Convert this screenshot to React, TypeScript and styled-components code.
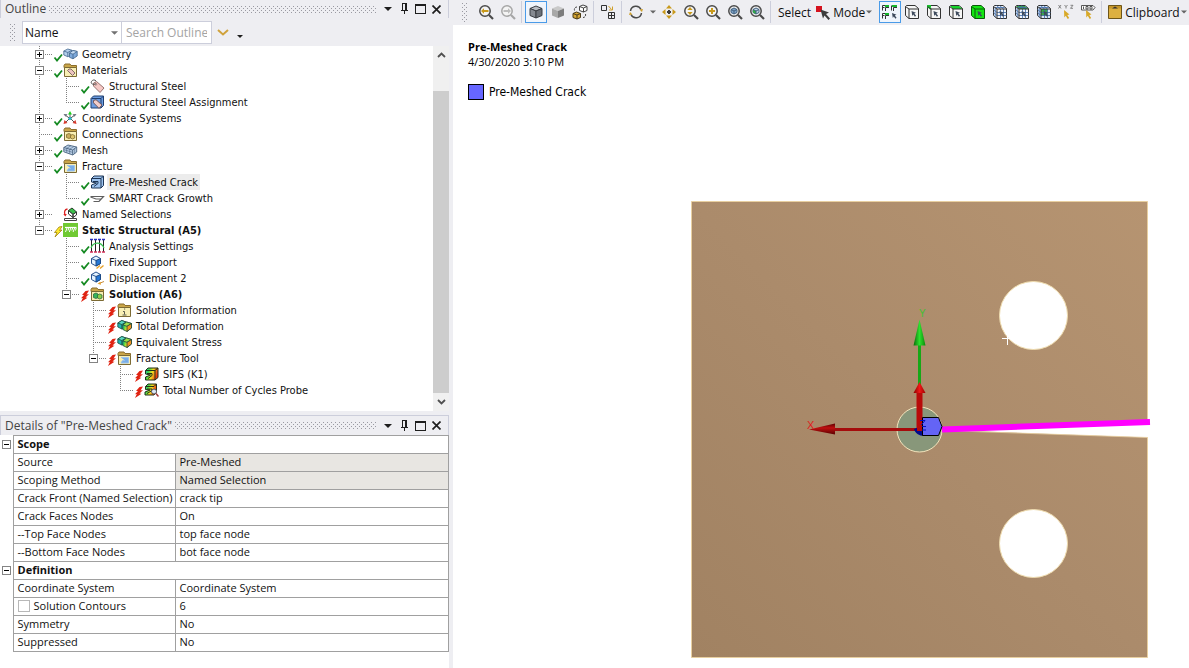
import React from "react";
import styled, { createGlobalStyle, css } from "styled-components";

const uiFont = `"Open Sans", "Noto Sans", sans-serif`;
const treeFont = `"DejaVu Sans Condensed", "DejaVu Sans", sans-serif`;
const chrome = "#eeeef2";

const Global = createGlobalStyle`
  *, *::before, *::after { box-sizing: border-box; }
  body { margin: 0; background: #fff; color: #111; font-family: ${uiFont}; font-size: 11px; }
  button, input, select { font: inherit; color: inherit; }
  ul { list-style: none; margin: 0; padding: 0; }
`;

/* ---------- page frame ---------- */

const Shell = styled.div`
  display: flex;
  min-height: 100vh;
`;

const Sidebar = styled.aside`
  display: flex;
  flex-direction: column;
  flex: 0 0 453px;
  padding-right: 4px;
  background: ${chrome};
`;

const Workspace = styled.main`
  display: flex;
  flex-direction: column;
  flex: 1;
  min-width: 0;
`;

/* ---------- panels ---------- */

const PanelHeader = styled.header<{ $tall?: boolean }>`
  display: flex;
  align-items: center;
  gap: 3px;
  height: ${(p) => (p.$tall ? 20 : 18)}px;
  padding: 0 4px;
  border: solid #cccedb;
  border-width: ${(p) => (p.$tall ? "1px 1px 0" : "0 1px")};
  background: ${chrome};
`;

const PanelTitle = styled.h2`
  margin: 0;
  font-size: 12px;
  line-height: 16px;
  font-weight: 400;
  color: #444;
  white-space: nowrap;
`;

/* staggered one-pixel dots */
const dotPattern = css`
  background-image: conic-gradient(at 1px 1px, transparent 270deg, #9a9aa2 0),
    conic-gradient(at 1px 1px, transparent 270deg, #9a9aa2 0);
  background-size: 4px 4px;
  background-position: 0 0, 2px 2px;
`;

const HeaderGrip = styled.div`
  flex: 1;
  height: 7px;
  ${dotPattern}
`;

const WindowButtons = styled.div`
  display: flex;
`;

const PlainButton = styled.button`
  display: grid;
  place-items: center;
  width: 16px;
  height: 16px;
  padding: 0;
  border: 0;
  background: transparent;
`;

const FilterBar = styled.div`
  display: flex;
  align-items: center;
  height: 28px;
  padding: 2px 0 2px 10px;
`;

const Grip = styled.div<{ $h: number }>`
  flex: none;
  width: 5px;
  height: ${(p) => p.$h}px;
  margin-right: 1px;
  ${dotPattern}
`;

const SelectWrap = styled.label`
  position: relative;
  display: block;
  width: 100px;
  margin-left: 6px;
`;

const FieldSelect = styled.select`
  display: block;
  appearance: none;
  width: 100%;
  height: 23px;
  padding: 0 18px 0 2px;
  border: 1px solid #cccedb;
  border-radius: 0;
  background: #fff;
  font-size: 12px;
`;

const SelectCaret = styled.svg`
  position: absolute;
  right: 4px;
  top: 10px;
  pointer-events: none;
`;

const SearchInput = styled.input`
  width: 90px;
  height: 23px;
  padding: 0 4px;
  border: 1px solid #cccedb;
  border-left: 0;
  background: #fff;
  font-size: 12px;
  &::placeholder { color: #a4a4a4; opacity: 1; }
`;

const TreeArea = styled.div`
  display: flex;
  background: #fff;
  margin-bottom: 4px;
`;

const TreeList = styled.ul`
  flex: 1;
  && { padding: 0 0 13px 35px; }
`;

const TreeRow = styled.div`
  display: flex;
  height: 16px;
`;

const TreeLabel = styled.span<{ $bold?: boolean; $active?: boolean }>`
  height: 16px;
  margin-left: 2px;
  padding: 0 2px;
  line-height: 18px;
  font-family: ${treeFont};
  font-weight: ${(p) => (p.$bold ? 700 : 400)};
  background: ${(p) => (p.$active ? "#ececec" : "transparent")};
  white-space: nowrap;
`;

const ScrollTrack = styled.div`
  display: flex;
  flex-direction: column;
  width: 16px;
  background: #f0f0f0;
`;

const ScrollArrow = styled.button`
  display: grid;
  place-items: center;
  height: 18px;
  padding: 0;
  border: 0;
  background: #f0f0f0;
`;

const ScrollThumb = styled.div`
  flex: 1;
  margin-top: 27px;
  background: #cdcdcd;
`;

/* ---------- details ---------- */

const DetailsBody = styled.div`
  flex: 1;
  background: #fff;
`;

const DetailsTable = styled.table`
  width: 100%;
  border-collapse: collapse;
  table-layout: fixed;
  line-height: 15px;
`;

const GutterCell = styled.td`
  padding: 0 0 0 2px;
  border-right: 1px solid #a0a0a0;
  vertical-align: middle;
`;

const cell = css`
  height: 18px;
  padding: 0 2px 2px 4px;
  border: 1px solid #a0a0a0;
  text-align: left;
  white-space: nowrap;
`;

const GroupCell = styled.th`
  ${cell}
  font-weight: 700;
`;

const NameCell = styled.th`
  ${cell}
  font-weight: 400;
`;

const ValueCell = styled.td<{ $locked?: boolean }>`
  ${cell}
  background: ${(p) => (p.$locked ? "#e8e6e2" : "#fff")};
`;

const CheckLabel = styled.label`
  display: flex;
  align-items: center;
  gap: 4px;
`;

const Check = styled.input`
  appearance: none;
  width: 12px;
  height: 12px;
  margin: 0;
  border: 1px solid #b8b8b8;
  background: #fff;
`;

const FoldButton = styled.button`
  display: block;
  width: 9px;
  height: 9px;
  padding: 0;
  border: 0;
  background: transparent;
`;

/* ---------- toolbar ---------- */

const Toolbar = styled.div`
  display: flex;
  align-items: center;
  height: 25px;
  padding: 0 0 1px 9px;
  background: ${chrome};
  overflow: hidden;
  font-size: 12px;
`;

const ToolGroup = styled.div`
  display: flex;
  align-items: center;
  flex: none;
  padding: 0 2px 0 3px;
  & + & { border-left: 1px solid #cccedb; }
  &:first-of-type { margin-left: 4px; }
`;

const Groups = styled.div`
  display: flex;
  align-items: center;
`;

const ToolButton = styled.button<{ $on?: boolean; $narrow?: boolean }>`
  display: grid;
  place-items: center;
  flex: none;
  width: ${(p) => (p.$narrow ? 11 : 22)}px;
  height: 22px;
  padding: 0;
  border: 1px solid ${(p) => (p.$on ? "#4a9be8" : "transparent")};
  background: ${(p) => (p.$on ? "#f0f5fc" : "transparent")};
`;

const TextButton = styled.button`
  display: flex;
  align-items: center;
  gap: 1px;
  height: 22px;
  padding: 0 7px 0 3px;
  border: 0;
  background: transparent;
  white-space: nowrap;
  & > svg:first-child { margin-right: 2px; }
`;

const ToolText = styled.span`
  padding: 0 2px 0 4px;
`;

/* ---------- viewport ---------- */

const Viewport = styled.section`
  position: relative;
  display: flex;
  flex: 1;
  min-height: 0;
  background: #fff;
`;

const Scene = styled.svg`
  flex: 1;
  width: 100%;
  min-width: 0;
`;

const Legend = styled.div`
  position: absolute;
  top: 14px;
  left: 15px;
  color: #000;
  line-height: 15px;
`;

const LegendTitle = styled.h1`
  margin: 0;
  font-size: 11px;
  line-height: 15px;
  font-weight: 700;
`;

const LegendItem = styled.div`
  display: flex;
  align-items: center;
  gap: 5px;
  margin-top: 15px;
  font-family: ${treeFont};
  font-size: 12px;
`;

const Swatch = styled.span`
  width: 16px;
  height: 16px;
  border: 1px solid #000;
  background: #6666ff;
`;

/* ---------- small glyphs ---------- */

const Caret = ({ color = "#1e1e1e", w = 7 }: { color?: string; w?: number }) => (
  <svg width={w} height="4" viewBox="0 0 8 4"><path d="M0 0h8L4 4z" fill={color} /></svg>
);

const PinIcon = () => (
  <svg width="9" height="12" viewBox="0 0 9 12" fill="none" stroke="#1e1e1e" shapeRendering="crispEdges">
    <path d="M2.500 7V.5h4V7M5.500 1v6M1 7.500h7M4.500 8v3" />
  </svg>
);
const MaxIcon = () => (
  <svg width="11" height="10" viewBox="0 0 11 10" fill="none" stroke="#1e1e1e" shapeRendering="crispEdges">
    <path d="M.5.5h10v9H.5zM0 1.500h11" />
  </svg>
);
const CloseIcon = () => (
  <svg width="9" height="9" viewBox="0 0 9 9"><path d="M.5.5l8 8M8.500.5l-8 8" stroke="#1e1e1e" strokeWidth="1.700" /></svg>
);

const HeaderButtons = () => (
  <WindowButtons>
    <PlainButton aria-label="Window menu"><Caret w={8} /></PlainButton>
    <PlainButton aria-label="Auto hide"><PinIcon /></PlainButton>
    <PlainButton aria-label="Maximize"><MaxIcon /></PlainButton>
    <PlainButton aria-label="Close"><CloseIcon /></PlainButton>
  </WindowButtons>
);

const FoldGlyph = styled.svg`
  display: block;
`;

const FoldBox = () => (
  <FoldGlyph width="9" height="9" viewBox="0 0 9 9" shapeRendering="crispEdges">
    <path d="M.5.5h8v8h-8z" fill="#fff" stroke="#848484" />
    <path d="M2 4.500h5" stroke="#000" />
  </FoldGlyph>
);

/* ---------- tree icons ---------- */

type IconName =
  | "geometry" | "materials" | "steel" | "assignment" | "coords" | "connections" | "mesh"
  | "fracture" | "crack" | "smart" | "named" | "static" | "settings" | "fixed"
  | "displacement" | "solution" | "info" | "result" | "fractureTool" | "sifs" | "probe";

const Folder = ({ children }: { children?: React.ReactNode }) => (
  <>
    <path d="M1 4.500V2.500L2 1h5l1 1.500h5.500v2z" fill="#c9a548" stroke="#8a6d2c" />
    <path d="M1.500 4.500h12v9h-12z" fill="#f8efb4" stroke="#7c6a34" />
    {children}
  </>
);

const BlueCube = () => (
  <>
    <path d="M1.500 3.500L6 1l4.500 2.500v5L6 11 1.500 8.500z" fill="#e6f4ff" stroke="#2a5590" />
    <path d="M6 5.500l4.500-2v5L6 11z" fill="#2677d4" stroke="#1d4a85" />
    <path d="M1.500 3.500L6 5.500" stroke="#2a5590" />
  </>
);

const RainbowDefs = () => (
  <svg width="0" height="0" aria-hidden="true">
    <defs>
      <linearGradient id="rainbow" x1="0" x2="1" y1="0" y2="0.300">
        <stop offset="0" stopColor="#18b8c8" />
        <stop offset="0.300" stopColor="#3fd64a" />
        <stop offset="0.600" stopColor="#f4e020" />
        <stop offset="1" stopColor="#f03a10" />
      </linearGradient>
    </defs>
  </svg>
);

const treeIcons: Record<IconName, React.ReactNode> = {
  geometry: (
    <g stroke="#41668e" strokeWidth=".8" strokeLinejoin="round">
      <path d="M.8 4l4-2 4 1.200v4.500l-4 2-4-1.700z" fill="#b5d0ec" />
      <path d="M.8 4l4 1.500 4-2.300M4.800 5.500v4.200" fill="none" />
      <path d="M6.500 6L10 3.500l4.200 1V9L10 11.800l-3.500-1.500z" fill="#7fabdc" />
      <path d="M6.500 6L10 7.200l4.200-2.700L10 3.500z" fill="#c5dcf3" />
      <path d="M10 7.200v4.600" fill="none" />
    </g>
  ),
  materials: (
    <Folder><path d="M4.500 7.500l1.500-1.500h2l4 4-2.500 2.500z" fill="#ecc4bf" stroke="#7a6260" strokeWidth=".9" /></Folder>
  ),
  steel: (
    <g>
      <path d="M3.500 7V4.200l3-1.700 7.500 6.500-4 4.500z" fill="#f6c9c6" stroke="#8c6461" strokeWidth=".9" />
      <circle cx="5.800" cy="5.200" r="1" fill="#fff" stroke="#8c6461" strokeWidth=".8" />
      <path d="M5.800 5C2.500 6 .5 4.500 1.500 2.500S5 .5 6 2" fill="none" stroke="#555" />
    </g>
  ),
  assignment: (
    <g>
      <path d="M1 3.500L3.500 1h10v9.500L11 13H1z" fill="#6c9ce0" stroke="#1f3f70" />
      <path d="M1.500 3.500H11V13M11 3.500L13.500 1" fill="none" stroke="#1f3f70" />
      <path d="M3.500 7.800V5.500l2.500-.8 6 5.300-3 3.300z" fill="#f2cdc9" stroke="#6e4e4c" strokeWidth=".9" />
    </g>
  ),
  coords: (
    <g>
      <path d="M7 7V2M7 7.500L2 4M7 7.500L12 4M7 7l-5 5M7 7l5 5" stroke="#555" />
      <path d="M5 3.500l2-3.500 2 3.500z" fill="#1bd01b" />
      <path d="M.5 3l4 .2-2 2.500zM13.500 3l-4 .2 2 2.500z" fill="#68707c" />
      <path d="M.5 13l1-4 3 3zM13.500 13l-1-4-3 3z" fill="#d83a2c" />
      <circle cx="7" cy="7.500" r="1.600" fill="#2ab6c8" />
    </g>
  ),
  connections: (
    <Folder>
      <path d="M3.500 7.500l2.500-1 2 1v3l-2 1-2.500-1z" fill="#c9ae5c" stroke="#7c682e" strokeWidth=".8" />
      <path d="M7.500 8.500l2-1 2.200 1V11l-2.200 1-2-1z" fill="#dcc36e" stroke="#7c682e" strokeWidth=".8" />
    </Folder>
  ),
  mesh: (
    <g stroke="#4a637f" strokeWidth=".9" strokeLinejoin="round">
      <path d="M.8 4.500L5 2l8.700 2v5l-4 3L.8 8.800z" fill="#bcd2ea" />
      <path d="M.8 4.500L9.700 7v5M9.700 7l4-3" fill="none" />
      <path d="M3.700 5.300v4.200M6.700 6.200v4.600M.8 6.600l8.900 2.800M3.700 5.300L8 2.700M6.700 6.200L11 3.400M11.700 5.500v5" fill="none" strokeWidth=".6" />
    </g>
  ),
  fracture: (
    <Folder><path d="M4 6.500h7.500v5.500H4l1.500-2.500H8" fill="#78aee8" stroke="#9cc2ec" /></Folder>
  ),
  crack: (
    <g>
      <path d="M1.500 3.500L4 1h9.500v9.500L11 13H1.500v-3l5-2-5-1z" fill="#9cc2ee" stroke="#1d3555" />
      <path d="M1.500 3.500H11V13M11 3.500L13.500 1" fill="none" stroke="#1d3555" />
      <path d="M3 6.500h5v2L4 11.500" fill="none" stroke="#1d3555" />
    </g>
  ),
  smart: <path d="M.5 5.500H13.500L9 10.500H3.500M.5 6l5.500 2h5" fill="none" stroke="#606060" strokeWidth="1.200" />,
  named: (
    <g>
      <path d="M5.500 3.500L9 1l4.500 4L10 7.500z" fill="#3cc04c" stroke="#243d26" />
      <path d="M5.500 3.500V7L10 10.500v-3zM10 10.500L13.500 8V5L10 7.500z" fill="#fff" stroke="#333" />
      <path d="M4.500 2C1.500 2.500 1 5 2 8" fill="none" stroke="#d22" strokeWidth="1.300" />
      <path d="M.3 7h3.500l-1.500 2.500z" fill="#d22" />
      <path d="M1.500 11.500h12v2h-12z" fill="#fff" stroke="#444" />
    </g>
  ),
  static: (
    <g>
      <path d="M0 0h15v14H0z" fill="#6fc932" />
      <path d="M2 4.500h11.500" stroke="#fff" strokeWidth="1.200" />
      <path d="M4 5L2.500 9M7.800 5L6.300 9M11.600 5l-1.500 4M5.800 5L5 7.500M9.600 5l-.8 2.500M13.200 5l-.7 2.500" stroke="#fff" />
    </g>
  ),
  settings: (
    <g fill="none">
      <path d="M1.500 1v12M5.500 1v12M9.500 1v12M13.500 1v12" stroke="#222" />
      <path d="M0 .5h3M4 .5h3M8 .5h3M12 .5h3" stroke="#2a2fc0" strokeWidth="1.500" />
      <path d="M1 9c2-6 10-7 13 0" stroke="#35c050" strokeWidth="1.200" />
      <path d="M0 13h3M4 13h3M8 13h3M12 13h3" stroke="#d2325a" strokeWidth="1.300" />
    </g>
  ),
  fixed: (<g><BlueCube /><path d="M6.500 13.500l3.500-3M10 13.500l3.500-3" stroke="#e6a02a" strokeWidth="1.400" /></g>),
  displacement: (<g><BlueCube /><path d="M9 12.500l5-2" stroke="#c88d3c" /><path d="M7.500 12.800l3-2 .5 3z" fill="#e6a02a" /></g>),
  solution: (
    <Folder>
      <path d="M3.500 7l2.500-1 2 1v3.500l-2 1-2.500-1z" fill="#35b55a" stroke="#2f6b45" strokeWidth=".8" />
      <path d="M7.500 8l2.200-1 2.300 1v3l-2.300 1-2.200-1z" fill="#8cd048" stroke="#2f6b45" strokeWidth=".8" />
    </Folder>
  ),
  info: (<Folder><path d="M6 8.500h1.500v3M5.500 12h4M7 6h1.200" stroke="#5c5c4c" fill="none" /></Folder>),
  result: (
    <g stroke="#1c4a3c" strokeWidth=".8" strokeLinejoin="round">
      <path d="M.8 4l4-2.500L9 3v5l-4.200 2-4-2z" fill="#1cb4b4" />
      <path d="M.8 4l4 1.500L9 3 4.800 1.500z" fill="#59d8c0" />
      <path d="M4.800 5.500V10" fill="none" />
      <path d="M5.800 6L9.500 3l5 1.500V9L10 12.500l-4.200-2z" fill="url(#rainbow)" />
      <path d="M5.800 6L10 7.300l4.500-2.800L9.500 3z" fill="#9be04a" />
      <path d="M10 7.300v5.200l4.500-3.500V4.500z" fill="#f09020" />
    </g>
  ),
  fractureTool: (
    <Folder><path d="M4 6.500h7.500v5.500H4l1.500-2.500H8" fill="#78aee8" stroke="#9cc2ec" /></Folder>
  ),
  sifs: (
    <g>
      <path d="M1.500 3.500L4 1h10v9.500L11 13H1.500v-3l5-2-5-1z" fill="url(#rainbow)" stroke="#243018" />
      <path d="M1.500 3.500H11V13M11 3.500L14 1M3 6.500h5v2L4 11.500" fill="none" stroke="#243018" />
    </g>
  ),
  probe: (
    <g>
      <path d="M1.500 3.500L4 1h8.500v8L10 12H1V9l5-2-4.500-.5z" fill="url(#rainbow)" stroke="#243018" />
      <path d="M1.500 3.500H10M10 3.500L12.500 1M3 6h5v1.500L3 10.500" fill="none" stroke="#243018" />
      <circle cx="10" cy="8.500" r="2.500" fill="#d9e6f4" stroke="#555" />
      <path d="M12 10.500l2.500 3" stroke="#a03c3c" strokeWidth="1.500" />
    </g>
  ),
};

type Status = "ok" | "bolt" | "stale" | "none";

const StatusIcon = ({ status }: { status: Status }) => (
  <svg width="10" height="16" viewBox="0 0 10 16">
    {status === "ok" && <path d="M1.500 11.500L4 14.500 9 8.500" fill="none" stroke="#158a22" strokeWidth="1.800" />}
    {status === "bolt" && <path d="M5.500 5L9 4.500 6.500 8.500l2.500-.5-3.500 3.500 2 .2L1 16l1.800-4-1.800.2L4 9H2z" fill="#e02312" />}
    {status === "stale" && (
      <path d="M6 5l3-.5-2.500 4L9 8l-7 7 2-4.500H1.500z" fill="#ffe92a" stroke="#a08410" strokeWidth=".8" />
    )}
  </svg>
);

interface TreeNode {
  label: string;
  icon: IconName;
  status?: Status;
  fold?: "plus" | "minus";
  bold?: boolean;
  active?: boolean;
  children?: TreeNode[];
}

const model: TreeNode[] = [
  { label: "Geometry", icon: "geometry", fold: "plus" },
  {
    label: "Materials", icon: "materials", fold: "minus",
    children: [
      { label: "Structural Steel", icon: "steel" },
      { label: "Structural Steel Assignment", icon: "assignment" },
    ],
  },
  { label: "Coordinate Systems", icon: "coords", fold: "plus" },
  { label: "Connections", icon: "connections" },
  { label: "Mesh", icon: "mesh", fold: "plus" },
  {
    label: "Fracture", icon: "fracture", fold: "minus",
    children: [
      { label: "Pre-Meshed Crack", icon: "crack", active: true },
      { label: "SMART Crack Growth", icon: "smart" },
    ],
  },
  { label: "Named Selections", icon: "named", fold: "plus", status: "none" },
  {
    label: "Static Structural (A5)", icon: "static", fold: "minus", status: "stale", bold: true,
    children: [
      { label: "Analysis Settings", icon: "settings" },
      { label: "Fixed Support", icon: "fixed" },
      { label: "Displacement 2", icon: "displacement" },
      {
        label: "Solution (A6)", icon: "solution", fold: "minus", status: "bolt", bold: true,
        children: [
          { label: "Solution Information", icon: "info", status: "bolt" },
          { label: "Total Deformation", icon: "result", status: "bolt" },
          { label: "Equivalent Stress", icon: "result", status: "bolt" },
          {
            label: "Fracture Tool", icon: "fractureTool", fold: "minus", status: "bolt",
            children: [
              { label: "SIFS (K1)", icon: "sifs", status: "bolt" },
              { label: "Total Number of Cycles Probe", icon: "probe", status: "bolt" },
            ],
          },
        ],
      },
    ],
  },
];

const Guide = ({ on }: { on: boolean }) => (
  <svg width="27" height="16" shapeRendering="crispEdges">
    {on && <path d="M4.500 0v16" stroke="#808080" strokeDasharray="1 1" />}
  </svg>
);

const Joint = ({ last, fold }: { last: boolean; fold?: "plus" | "minus" }) => (
  <svg width="18" height="16" shapeRendering="crispEdges">
    <path d={last ? "M4.500 0v9" : "M4.500 0v16"} stroke="#808080" strokeDasharray="1 1" />
    <path d="M4 8.500h14" stroke="#808080" strokeDasharray="1 1" />
    {fold && (
      <>
        <path d="M.5 4.500h8v8h-8z" fill="#fff" stroke="#848484" />
        <path d={fold === "plus" ? "M2 8.500h5M4.500 6v5" : "M2 8.500h5"} stroke="#000" />
      </>
    )}
  </svg>
);

const Branch = ({ nodes, guides }: { nodes: TreeNode[]; guides: boolean[] }) => (
  <>
    {nodes.map((node, i) => {
      const last = i === nodes.length - 1;
      return (
        <li key={node.label}>
          <TreeRow>
            {guides.map((on, g) => <Guide key={g} on={on} />)}
            <Joint last={last} fold={node.fold} />
            <StatusIcon status={node.status ?? "ok"} />
            <svg width="15" height="16" viewBox="0 -1 15 16">{treeIcons[node.icon]}</svg>
            <TreeLabel $bold={node.bold} $active={node.active}>{node.label}</TreeLabel>
          </TreeRow>
          {node.children && <ul><Branch nodes={node.children} guides={[...guides, !last]} /></ul>}
        </li>
      );
    })}
  </>
);

const OutlinePanel = () => (
  <section aria-label="Outline">
    <PanelHeader>
      <PanelTitle>Outline</PanelTitle>
      <HeaderGrip />
      <HeaderButtons />
    </PanelHeader>
    <FilterBar>
      <Grip $h={17} />
      <SelectWrap>
        <FieldSelect aria-label="Filter by" defaultValue="Name"><option>Name</option></FieldSelect>
        <SelectCaret width="7" height="4" viewBox="0 0 8 4"><path d="M0 0h8L4 4z" fill="#717171" /></SelectCaret>
      </SelectWrap>
      <SearchInput type="text" placeholder="Search Outline" aria-label="Search Outline" />
      <ToolButton aria-label="Expand filter">
        <svg width="12" height="7" viewBox="0 0 12 7"><path d="M1 1l5 4.500L11 1" fill="none" stroke="#d0a23c" strokeWidth="2" /></svg>
      </ToolButton>
      <ToolButton $narrow aria-label="More options">
        <svg width="6" height="12" viewBox="0 0 6 12"><path d="M0 9h6L3 12z" fill="#1e1e1e" /></svg>
      </ToolButton>
    </FilterBar>
    <TreeArea>
      <TreeList><Branch nodes={model} guides={[]} /></TreeList>
      <ScrollTrack>
        <ScrollArrow aria-label="Scroll up">
          <svg width="9" height="6" viewBox="0 0 9 6"><path d="M1 5l3.500-3.500L8 5" fill="none" stroke="#505050" strokeWidth="1.800" /></svg>
        </ScrollArrow>
        <ScrollThumb />
        <ScrollArrow aria-label="Scroll down">
          <svg width="9" height="6" viewBox="0 0 9 6"><path d="M1 1l3.500 3.500L8 1" fill="none" stroke="#505050" strokeWidth="1.800" /></svg>
        </ScrollArrow>
      </ScrollTrack>
    </TreeArea>
  </section>
);

interface Property { name: string; value: string; locked?: boolean; checkable?: boolean }

const groups: { title: string; rows: Property[] }[] = [
  {
    title: "Scope",
    rows: [
      { name: "Source", value: "Pre-Meshed", locked: true },
      { name: "Scoping Method", value: "Named Selection", locked: true },
      { name: "Crack Front (Named Selection)", value: "crack tip" },
      { name: "Crack Faces Nodes", value: "On" },
      { name: "--Top Face Nodes", value: "top face node" },
      { name: "--Bottom Face Nodes", value: "bot face node" },
    ],
  },
  {
    title: "Definition",
    rows: [
      { name: "Coordinate System", value: "Coordinate System" },
      { name: "Solution Contours", value: "6", checkable: true },
      { name: "Symmetry", value: "No" },
      { name: "Suppressed", value: "No" },
    ],
  },
];

const GutterCol = styled.col`
  width: 13px;
`;
const NameCol = styled.col`
  width: 162px;
`;

const DetailsPanel = () => (
  <>
    <PanelHeader $tall>
      <PanelTitle>Details of "Pre-Meshed Crack"</PanelTitle>
      <HeaderGrip />
      <HeaderButtons />
    </PanelHeader>
    <DetailsBody>
      <DetailsTable>
        <colgroup>
          <GutterCol />
          <NameCol />
          <col />
        </colgroup>
        {groups.map((group) => (
          <tbody key={group.title}>
            <tr>
              <GutterCell>
                <FoldButton aria-label={`Collapse ${group.title}`}><FoldBox /></FoldButton>
              </GutterCell>
              <GroupCell colSpan={2} scope="colgroup">{group.title}</GroupCell>
            </tr>
            {group.rows.map((row) => (
              <tr key={row.name}>
                <GutterCell />
                <NameCell scope="row">
                  {row.checkable ? (
                    <CheckLabel><Check type="checkbox" />{row.name}</CheckLabel>
                  ) : row.name}
                </NameCell>
                <ValueCell $locked={row.locked}>{row.value}</ValueCell>
              </tr>
            ))}
          </tbody>
        ))}
      </DetailsTable>
    </DetailsBody>
  </>
);

/* ---------- toolbar icons ---------- */

const Lens = ({ tone = "#4a4a4a", children }: { tone?: string; children?: React.ReactNode }) => (
  <svg width="16" height="16" viewBox="0 0 16 16">
    <circle cx="7" cy="7" r="5.200" fill="#f4f4f4" stroke={tone} strokeWidth="1.500" />
    <path d="M11 11l4 4" stroke={tone} strokeWidth="2.200" />
    {children}
  </svg>
);

const WireCube = ({ children, body = "#f6f6f6", line = "#333" }: { children?: React.ReactNode; body?: string; line?: string }) => (
  <svg width="16" height="16" viewBox="0 0 16 16">
    <path d="M1.500 2.500l1-1h8.500l3.500 3v10H5l-3.500-3z" fill={body} stroke={line} strokeLinejoin="round" />
    {children}
    <path d="M1.500 2.500l3.500 2.500h9.500M5 5v9.500" fill="none" stroke={line} />
    <path d="M7.500 7l4.500 1.800-1.700.8 1.800 2.200-1.200.9-1.600-2.100-1 1.400z" fill="#3d4a5c" />
  </svg>
);

const MeshLines = () => (
  <path d="M8.500 5v9.500M11.500 5v9.500M5 8.500h9.500M5 11.500h9.500M3.200 3.700V13M1.500 5.500L5 8.500M1.500 8.500L5 11.500M4.500 1.500L8.500 5M7.500 1.500l4 3.500M3.200 3.500h9.500" fill="none" stroke="#3d6aa8" strokeWidth=".8" />
);

const SolidCube = ({ top, left, right, line }: { top: string; left: string; right: string; line: string }) => (
  <svg width="14" height="14" viewBox="0 0 14 14" strokeLinejoin="round">
    <path d="M1 3.500L7 1l6 2.500L7 6z" fill={top} stroke={line} />
    <path d="M1 3.500L7 6v7l-6-2.500z" fill={left} stroke={line} />
    <path d="M13 3.500L7 6v7l6-2.500z" fill={right} stroke={line} />
  </svg>
);

const PointerTool = ({ children }: { children: React.ReactNode }) => (
  <svg width="16" height="16" viewBox="0 0 16 16">
    {children}
    <path d="M6 6l5.500 4.500-2.200.4 1.900 3.200-1.500.9-1.900-3.200L6.300 13.500z" fill="#d8a928" />
  </svg>
);

const MainToolbar = () => (
  <Toolbar role="toolbar" aria-label="Graphics">
    <Grip $h={19} />
    <Groups>
      <ToolGroup>
        <ToolButton aria-label="Previous view">
          <Lens><path d="M3 7l3-2.700V6h4.500v2H6v1.700z" fill="#c99a1c" /></Lens>
        </ToolButton>
        <ToolButton aria-label="Next view">
          <Lens tone="#a6a6a6"><path d="M11 7L8 4.300V6H3.500v2H8v1.700z" fill="#bdbdbd" /></Lens>
        </ToolButton>
      </ToolGroup>
      <ToolGroup>
        <ToolButton $on aria-label="Shaded with edges"><SolidCube top="#b8bcc2" left="#858a92" right="#6b7078" line="#3a3e44" /></ToolButton>
        <ToolButton aria-label="Shaded"><SolidCube top="#c9c9c9" left="#a8a8a8" right="#7d7d7d" line="none" /></ToolButton>
        <ToolButton aria-label="Show transitions">
          <svg width="16" height="16" viewBox="0 0 16 16" strokeLinejoin="round">
            <path d="M7.500 2.500L11 1l4 1.500v4L11.500 8l-4-1.500z" fill="#fff" stroke="#444" />
            <path d="M7.500 2.500l4 1.500L15 2.500M11.500 4v4" fill="none" stroke="#444" />
            <path d="M1 9.500L4.500 8l4 1.500v4L5 15l-4-1.500z" fill="#d7a735" stroke="#4a3a14" />
            <path d="M1 9.500L5 11l3.500-1.500M5 11v4" fill="none" stroke="#4a3a14" />
            <path d="M2.500 6.500C2 4.500 3 3 5 3M13.500 10c.5 2-.5 3.500-2.500 3.500" fill="none" stroke="#444" strokeDasharray="2 1" />
          </svg>
        </ToolButton>
      </ToolGroup>
      <ToolGroup>
        <ToolButton aria-label="Rescale">
          <svg width="16" height="16" viewBox="0 0 16 16" fill="none">
            <path d="M1.500 1.500h5v5h-5zM8.500 8.500h6v6h-6zM11.500 8.500v6M8.500 11.500h6" stroke="#333" />
            <path d="M8.500 2l3 3.500M12.500 2.500v3.500H9" stroke="#d0a02a" />
          </svg>
        </ToolButton>
      </ToolGroup>
      <ToolGroup>
        <ToolButton aria-label="Rotate">
          <svg width="16" height="16" viewBox="0 0 16 16" fill="none">
            <path d="M2.500 7a5.500 5.500 0 0 1 10.500-1.500M13.500 9A5.500 5.500 0 0 1 3 10.500" stroke="#4a4a4a" strokeWidth="1.500" />
            <path d="M11.500 5.500L15 5l-1 3zM4.500 10.500L1 11l1-3z" fill="#d0a02a" />
          </svg>
        </ToolButton>
        <ToolButton $narrow aria-label="Rotate options"><Caret color="#666" w={6} /></ToolButton>
        <ToolButton aria-label="Pan">
          <svg width="14" height="14" viewBox="0 0 14 14">
            <path d="M7 0l3 3.500H4zM7 14l3-3.500H4zM0 7l3.500-3v6zM14 7l-3.500-3v6z" fill="#c99a1c" />
            <path d="M6 5h2v4H6zM5 6h4v2H5z" fill="#3c3c3c" />
          </svg>
        </ToolButton>
        <ToolButton aria-label="Zoom">
          <Lens><path d="M7 3l2.700 3H4.300zM7 11l2.700-3H4.300z" fill="#c99a1c" /></Lens>
        </ToolButton>
        <ToolButton aria-label="Box zoom">
          <Lens><path d="M7 4v6M4 7h6" stroke="#c99a1c" strokeWidth="2" /></Lens>
        </ToolButton>
        <ToolButton aria-label="Zoom to fit">
          <Lens><path d="M4 5.500L7 4l3 1.500v3L7 10 4 8.500z" fill="#7fa3c9" stroke="#40607f" /><path d="M4 5.500L7 7l3-1.500M7 7v3" fill="none" stroke="#40607f" /></Lens>
        </ToolButton>
        <ToolButton aria-label="Zoom to selection">
          <Lens><path d="M4 5.500L7 4l3 1.500v3L7 10 4 8.500z" fill="#c3d5e6" stroke="#40607f" /><path d="M4 5.500L7 7v3L4 8.500z" fill="#2fae44" /><path d="M4 5.500L7 7l3-1.500M7 7v3" fill="none" stroke="#40607f" /></Lens>
        </ToolButton>
      </ToolGroup>
      <ToolGroup>
        <ToolText>Select</ToolText>
        <TextButton>
          <svg width="14" height="15" viewBox="0 0 14 15">
            <path d="M0 1h6v6H0z" fill="#d5121e" />
            <path d="M4.500 4.500l8.500 3-3 1.500 4 4.500-1.500 1.500-4-4.500L7 13.500z" fill="#3c3c3c" />
          </svg>
          Mode
          <Caret color="#666" w={6} />
        </TextButton>
        <ToolButton $on aria-label="Smart select">
          <svg width="18" height="18" viewBox="0 0 18 18" fill="none">
            <path d="M4 2h4v2H4zM11 2h5v2h-5zM4 10h4v2H4z" fill="#17b62c" />
            <path d="M1.500 7.500v-5H4M1.500 4.500h2M10.500 7.500v-5M1.500 15.500v-5H4M1.500 12.500h2M4.500 8V4.500H8M12.500 8V4.500H16M4.500 16v-3.500H8" stroke="#333" />
            <path d="M11 10l4.500 1.800-1.700.8 1.800 2.200-1.200.9-1.600-2.100-1 1.400z" fill="#3d4a5c" />
          </svg>
        </ToolButton>
        <ToolButton aria-label="Vertex"><WireCube /></ToolButton>
        <ToolButton aria-label="Edge"><WireCube><path d="M1 1h4v2.500H1z" fill="#17c62c" /><path d="M2 2.500L5 5" stroke="#17c62c" strokeWidth="2" /></WireCube></ToolButton>
        <ToolButton aria-label="Face"><WireCube><path d="M2 2h9l3.500 3H5z" fill="#17d42c" /></WireCube></ToolButton>
        <ToolButton aria-label="Body"><WireCube body="#12e612" line="#0a5a0a" /></ToolButton>
        <ToolButton aria-label="Node"><WireCube body="#eef3fb"><MeshLines /></WireCube></ToolButton>
        <ToolButton aria-label="Element face"><WireCube body="#eef3fb"><path d="M2 2h9l3.500 3H5z" fill="#3aa84a" /><MeshLines /></WireCube></ToolButton>
        <ToolButton aria-label="Element"><WireCube body="#dbe6f6"><path d="M5 5h6.500v6.500H5z" fill="#3aa84a" /><MeshLines /></WireCube></ToolButton>
        <ToolButton aria-label="Coordinates">
          <PointerTool><path d="M.5 1l2.500 3.500M3 1L.5 4.500M6.500 1L8 2.700 9.500 1M8 2.500v2M12.500 1.300h2.500l-2.500 3H15" fill="none" stroke="#777" strokeWidth=".9" /></PointerTool>
        </ToolButton>
        <ToolButton aria-label="Probe label">
          <PointerTool><path d="M1.500 1.500H13l2 2-2 2.500H1.500zM3.500 2.500v2.500M6 2.500h2v2.500H6zM10 2.500h2v2.500h-2z" fill="#fff" stroke="#444" strokeWidth=".9" /></PointerTool>
        </ToolButton>
      </ToolGroup>
      <ToolGroup>
        <TextButton>
          <svg width="14" height="14" viewBox="0 0 14 14">
            <path d="M.5.5h13v13H.5z" fill="#ddb040" stroke="#6e5518" />
            <path d="M1 1h12v2.500H1z" fill="#c4952a" />
            <path d="M4 3.500L7 1.500l3 2z" fill="#333" />
          </svg>
          Clipboard
          <Caret color="#666" w={6} />
        </TextButton>
      </ToolGroup>
    </Groups>
  </Toolbar>
);

/* ---------- 3D scene: cracked plate with two holes and the crack-tip triad ---------- */

const PlateScene = () => (
  <Scene viewBox="0 0 736 643" preserveAspectRatio="xMidYMid meet" role="img" aria-label="Plate with pre-meshed crack">
    <defs>
      <linearGradient id="plate" x1="0" y1="1" x2="1" y2="0">
        <stop offset="0" stopColor="#a18262" />
        <stop offset="0.500" stopColor="#ab8b6b" />
        <stop offset="1" stopColor="#b69471" />
      </linearGradient>
      <linearGradient id="greenCone" x1="0" x2="1"><stop offset="0" stopColor="#0a6e0a" /><stop offset=".5" stopColor="#2ee02e" /><stop offset="1" stopColor="#0a8a0a" /></linearGradient>
      <linearGradient id="redCone" x1="0" x2="1"><stop offset="0" stopColor="#8a0000" /><stop offset=".5" stopColor="#f01818" /><stop offset="1" stopColor="#a00000" /></linearGradient>
      <linearGradient id="xCone" x1="0" x2="0" y1="0" y2="1"><stop offset="0" stopColor="#5e0000" /><stop offset=".4" stopColor="#c01010" /><stop offset="1" stopColor="#5a0000" /></linearGradient>
    </defs>
    <path d="M238.500 176.500h456v456h-456z" fill="url(#plate)" stroke="#e8cfa0" />
    <circle cx="580.500" cy="290.500" r="34" fill="#fff" stroke="#efdcae" />
    <circle cx="580.500" cy="518.500" r="34" fill="#fff" stroke="#efdcae" />
    <path d="M549 313.500h9M554.500 309v11" stroke="#fff" />
    <path d="M490 405L696 396v16.500z" fill="#fff" />
    <path d="M490 405.500L695 412.500" stroke="#e8cfa0" strokeWidth=".8" />
    <circle cx="466.500" cy="404.500" r="22.500" fill="#88977a" stroke="#f2e4bc" />
    <path d="M489 404.500L697 397" stroke="#ff00ff" strokeWidth="6" />
    <path d="M466.500 320v42" stroke="#17a817" strokeWidth="3" />
    <path d="M466.500 294.500l6 26h-12z" fill="url(#greenCone)" />
    <path d="M466.500 403v-35" stroke="#b80a0a" strokeWidth="6" />
    <path d="M466.500 357l6 11h-12z" fill="url(#redCone)" />
    <path d="M466 404.500h-84" stroke="#a50c0c" strokeWidth="3" />
    <path d="M356 404.500l26-6v11z" fill="url(#xCone)" />
    <path d="M461 404l5-2h5v9c-5 0-9-3-10-7z" fill="#000a8c" />
    <path d="M469.500 392.500h16l3.500 9-3.500 9h-16z" fill="#6464f5" stroke="#000" />
    <path d="M467 395.500h5l-5 6h6M467 405h6" fill="none" stroke="#0010c0" />
    <path d="M464 400h5v6h-5z" fill="#b80a0a" />
    <text x="354" y="404" fill="#e02020" fontFamily="Liberation Sans, sans-serif" fontSize="11">X</text>
    <text x="466" y="292" fill="#44c030" fontFamily="Liberation Sans, sans-serif" fontSize="10">Y</text>
  </Scene>
);

export default function App() {
  return (
    <>
      <Global />
      <Shell>
        <Sidebar>
          <OutlinePanel />
          <DetailsPanel />
        </Sidebar>
        <Workspace>
          <MainToolbar />
          <Viewport>
            <PlateScene />
            <Legend>
              <RainbowDefsHost />
              <LegendTitle>Pre-Meshed Crack</LegendTitle>
              <div>4/30/2020 3:10 PM</div>
              <LegendItem><Swatch />Pre-Meshed Crack</LegendItem>
            </Legend>
          </Viewport>
        </Workspace>
      </Shell>
    </>
  );
}

const DefsHost = styled.div`
  position: absolute;
  width: 0;
  height: 0;
  overflow: hidden;
`;

const RainbowDefsHost = () => (
  <DefsHost><RainbowDefs /></DefsHost>
);
